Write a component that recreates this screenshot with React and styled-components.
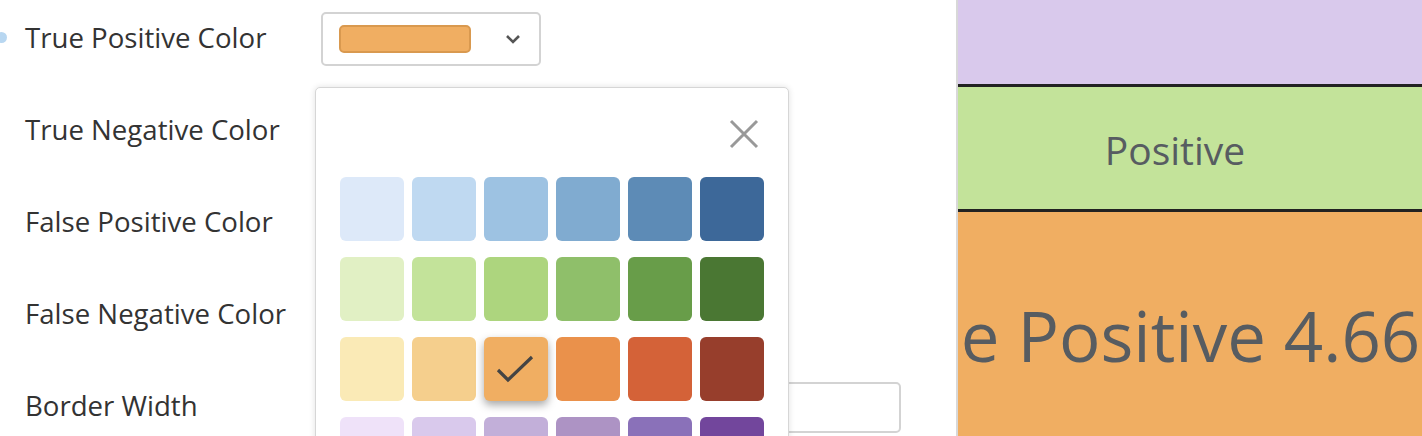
import React from "react";
import styled, { createGlobalStyle } from "styled-components";

const GlobalStyle = createGlobalStyle`
  html, body {
    margin: 0;
    padding: 0;
    background: #ffffff;
    overflow: hidden;
  }
  body {
    font-family: "Open Sans", "Liberation Sans", sans-serif;
    color: #333333;
  }
`;

const palette = [
  ["#dde9f9", "#bfd9f1", "#9dc2e2", "#80abd0", "#5d8bb6", "#3d6899"],
  ["#e1f0c4", "#c3e39a", "#add57e", "#8fbf6a", "#689d49", "#4a7733"],
  ["#faeab6", "#f5cf8d", "#f0ae62", "#ea914b", "#d46238", "#973e2c"],
  ["#efe2f9", "#d9c9ec", "#c2afd9", "#ad93c4", "#8a71b9", "#72469c"],
];

const selected = "#f0ae62";

const App = () => {
  return (
    <>
      <GlobalStyle />
      <Page>
        <Settings>
          <Row>
            <Label>
              <Dot />
              True Positive Color
            </Label>
            <Control>
              <Trigger>
                <ColorChip color={selected} />
                <svg width="18" height="12" viewBox="0 0 18 12">
                  <path
                    d="M3 3 L9 9 L15 3"
                    fill="none"
                    stroke="#555"
                    strokeWidth="2.6"
                  />
                </svg>
              </Trigger>
              <Popover>
                <CloseRow>
                  <svg width="30" height="30" viewBox="0 0 30 30">
                    <path
                      d="M2 2 L28 28 M28 2 L2 28"
                      stroke="#999"
                      strokeWidth="3"
                    />
                  </svg>
                </CloseRow>
                <Grid>
                  {palette.flat().map((c) => (
                    <Swatch key={c} color={c} active={c === selected}>
                      {c === selected && (
                        <svg width="40" height="30" viewBox="0 0 40 30">
                          <path
                            d="M2 15 L12 25 L36 2"
                            fill="none"
                            stroke="#444"
                            strokeWidth="3.2"
                          />
                        </svg>
                      )}
                    </Swatch>
                  ))}
                </Grid>
              </Popover>
            </Control>
          </Row>
          <Row>
            <Label>True Negative Color</Label>
          </Row>
          <Row>
            <Label>False Positive Color</Label>
          </Row>
          <Row>
            <Label>False Negative Color</Label>
          </Row>
          <Row>
            <Label>Border Width</Label>
            <Input />
          </Row>
        </Settings>
        <Preview>
          <Band color="#d9c9ec" height="87px" />
          <Band color="#c3e39a" height="125px" size="39px" shift="30px" top="2px">
            Positive
          </Band>
          <Band color="#f0ae62" size="69px" top="22px" grow>
            <BigText>True Positive 4.666%</BigText>
          </Band>
        </Preview>
      </Page>
    </>
  );
};

export default App;

const Page = styled.div`
  display: flex;
  width: 1422px;
  height: 436px;
  overflow: hidden;
`;

const Settings = styled.div`
  width: 958px;
  flex-shrink: 0;
  border-right: 2px solid #d8d8d8;
  box-sizing: border-box;
  padding: 12px 0 0 25px;
  display: flex;
  flex-direction: column;
  gap: 38px;
`;

const Row = styled.div`
  display: flex;
  align-items: center;
  height: 54px;
`;

const Label = styled.div`
  position: relative;
  width: 296px;
  flex-shrink: 0;
  font-size: 27.6px;
  color: #333;
  margin-top: -5px;
`;

const Dot = styled.span`
  position: absolute;
  left: -29px;
  top: 50%;
  margin-top: -5px;
  width: 11px;
  height: 11px;
  border-radius: 50%;
  background: #b8d7f1;
`;

const Control = styled.div`
  position: relative;
`;

const Trigger = styled.div`
  width: 220px;
  height: 54px;
  box-sizing: border-box;
  border: 2px solid #d3d3d3;
  border-radius: 5px;
  display: flex;
  align-items: center;
  justify-content: space-between;
  padding: 0 17px 0 16px;
  background: #fff;
`;

const ColorChip = styled.div`
  width: 132px;
  height: 28px;
  box-sizing: border-box;
  border-radius: 5px;
  background: ${(p) => p.color};
  border: 2px solid #d9994f;
`;

const Popover = styled.div`
  position: absolute;
  top: 75px;
  left: -6px;
  width: 474px;
  height: 380px;
  box-sizing: border-box;
  background: #fff;
  border: 1px solid #d6d6d6;
  border-radius: 5px;
  box-shadow: 0 0 6px rgba(0, 0, 0, 0.12);
  padding: 31px 24px 0 24px;
  z-index: 2;
`;

const CloseRow = styled.div`
  display: flex;
  justify-content: flex-end;
  padding-right: 5px;
  height: 58px;
  svg {
    display: block;
  }
`;

const Grid = styled.div`
  display: grid;
  grid-template-columns: repeat(6, 64px);
  grid-auto-rows: 64px;
  column-gap: 8px;
  row-gap: 16px;
`;

const Swatch = styled.div`
  border-radius: 6px;
  background: ${(p) => p.color};
  display: flex;
  align-items: center;
  justify-content: center;
  box-shadow: ${(p) => (p.active ? "0 4px 8px rgba(0, 0, 0, 0.35)" : "none")};
  svg {
    margin-top: 2px;
  }
`;

const Input = styled.div`
  width: 580px;
  height: 51px;
  box-sizing: border-box;
  border: 2px solid #d3d3d3;
  border-radius: 5px;
  background: #fff;
`;

const Preview = styled.div`
  flex: 1;
  display: flex;
  flex-direction: column;
  overflow: hidden;
`;

const Band = styled.div`
  flex: ${(p) => (p.grow ? "1" : "none")};
  height: ${(p) => p.height || "auto"};
  box-sizing: border-box;
  background: ${(p) => p.color};
  border-bottom: ${(p) => (p.grow ? "none" : "3px solid #222")};
  display: flex;
  align-items: center;
  justify-content: center;
  font-size: ${(p) => p.size || "39px"};
  color: #575c61;
  white-space: nowrap;
  overflow: hidden;
  padding-right: ${(p) => p.shift || "0"};
  padding-top: ${(p) => p.top || "0"};
`;

const BigText = styled.span`
  flex-shrink: 0;
  margin-left: -11px;
`;
